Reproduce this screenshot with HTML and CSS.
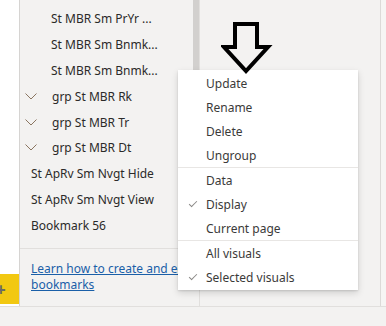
FILE: index.html
```html
<!DOCTYPE html>
<html lang="en">
<head>
  <meta charset="UTF-8">
  <title>Bookmarks</title>
  <link rel="stylesheet" href="styles.css">
</head>
<body>
  <div class="screen">
    <div class="main">
      <div class="rail">
        <div class="rail-space"></div>
        <div class="add-btn"><span>+</span></div>
      </div>
      <div class="panel">
        <ul class="bookmarks">
          <li class="child">St MBR Sm PrYr ...</li>
          <li class="child">St MBR Sm Bnmk...</li>
          <li class="child">St MBR Sm Bnmk...</li>
          <li class="group"><svg class="chev" width="12" height="7" viewBox="0 0 12 7"><path d="M0.5 0.5 L6 6 L11.5 0.5" fill="none" stroke="#8a7560" stroke-width="1"/></svg>grp St MBR Rk</li>
          <li class="group"><svg class="chev" width="12" height="7" viewBox="0 0 12 7"><path d="M0.5 0.5 L6 6 L11.5 0.5" fill="none" stroke="#8a7560" stroke-width="1"/></svg>grp St MBR Tr</li>
          <li class="group"><svg class="chev" width="12" height="7" viewBox="0 0 12 7"><path d="M0.5 0.5 L6 6 L11.5 0.5" fill="none" stroke="#8a7560" stroke-width="1"/></svg>grp St MBR Dt</li>
          <li>St ApRv Sm Nvgt Hide</li>
          <li>St ApRv Sm Nvgt View</li>
          <li>Bookmark 56</li>
        </ul>
        <div class="learn">
          <a href="#">Learn how to create and edit bookmarks</a>
        </div>
        <div class="scrollbar"></div>
      </div>
      <div class="canvas"></div>
      <div class="edge"></div>
    </div>
    <div class="footer"></div>

    <svg class="arrow" width="56" height="58" viewBox="0 0 56 58">
      <path d="M14 3 H36 V26 H47 L25 50 L3 26 H14 Z" fill="none" stroke="#000" stroke-width="4" stroke-linejoin="miter"/>
    </svg>

    <div class="menu">
      <div class="menu-item">Update</div>
      <div class="menu-item">Rename</div>
      <div class="menu-item">Delete</div>
      <div class="menu-item">Ungroup</div>
      <div class="menu-sep"></div>
      <div class="menu-item">Data</div>
      <div class="menu-item checked">Display</div>
      <div class="menu-item">Current page</div>
      <div class="menu-sep"></div>
      <div class="menu-item">All visuals</div>
      <div class="menu-item checked">Selected visuals</div>
    </div>
  </div>
</body>
</html>
```

FILE: styles.css
```css
:root {
  --font-family: 'Noto Sans', 'Open Sans', sans-serif;
  --panel-bg: #f3f2f1;
  --line: #e1dfdd;
  --text: #2b2a29;
  --menu-text: #3b3a39;
  --link: #1a5fa8;
  --yellow: #f2c811;
}
* {
  box-sizing: border-box;
  margin: 0;
  padding: 0;
}
body {
  width: 386px;
  height: 326px;
  overflow: hidden;
  background: var(--panel-bg);
  font-family: var(--font-family);
  font-size: 12px;
  color: var(--text);
}
.screen {
  position: relative;
  width: 386px;
  height: 326px;
  display: flex;
  flex-direction: column;
}
.main {
  height: 306px;
  display: flex;
}
.rail {
  width: 20px;
  background: #fff;
  border-right: 1px solid #d6d4d2;
  display: flex;
  flex-direction: column;
}
.rail-space {
  flex: 1;
}
.add-btn {
  height: 30px;
  margin-bottom: 2px;
  background: var(--yellow);
  display: flex;
  align-items: center;
  overflow: hidden;
}
.add-btn span {
  margin-left: -4px;
  font-size: 17px;
  font-weight: bold;
  color: #6b6a68;
  line-height: 1;
}
.panel {
  position: relative;
  width: 180px;
  background: var(--panel-bg);
  border-right: 1px solid var(--line);
  overflow: hidden;
}
.bookmarks {
  list-style: none;
  padding-top: 6px;
  height: 249px;
  border-bottom: 1px solid var(--line);
}
.bookmarks li {
  height: 25.8px;
  display: flex;
  align-items: center;
  padding-left: 11px;
  white-space: nowrap;
}
.bookmarks li.child {
  padding-left: 31px;
}
.bookmarks li.group {
  padding-left: 5px;
}
.chev {
  margin-right: 15px;
}
.learn {
  padding: 12px 2px 0 11px;
  line-height: 16px;
}
.learn a {
  color: var(--link);
  text-decoration: underline;
}
.scrollbar {
  position: absolute;
  top: 0;
  right: 0;
  width: 6px;
  height: 150px;
  background: #d2d0ce;
}
.canvas {
  width: 181px;
  background: var(--panel-bg);
  border-right: 1px solid #dcdad8;
}
.edge {
  flex: 1;
  background: #f6f5f4;
}
.footer {
  flex: 1;
  border-top: 1px solid var(--line);
  background: var(--panel-bg);
}
.arrow {
  position: absolute;
  left: 221px;
  top: 21px;
  z-index: 2;
}
.menu {
  position: absolute;
  left: 178px;
  top: 70px;
  width: 180px;
  height: 220px;
  padding-top: 1px;
  background: #fff;
  box-shadow: 0 3px 7px rgba(0, 0, 0, 0.14), 0 0.6px 1.8px rgba(0, 0, 0, 0.12);
  color: var(--menu-text);
  z-index: 1;
}
.menu-item {
  position: relative;
  height: 24px;
  padding-top: 2px;
  line-height: 22px;
  padding-left: 28px;
}
.menu-item.checked::before {
  content: "";
  position: absolute;
  left: 11px;
  top: 9px;
  width: 7px;
  height: 3px;
  border-left: 1px solid #8a8886;
  border-bottom: 1px solid #8a8886;
  transform: rotate(-45deg);
}
.menu-sep {
  height: 1px;
  background: #e8e6e4;
}
```
